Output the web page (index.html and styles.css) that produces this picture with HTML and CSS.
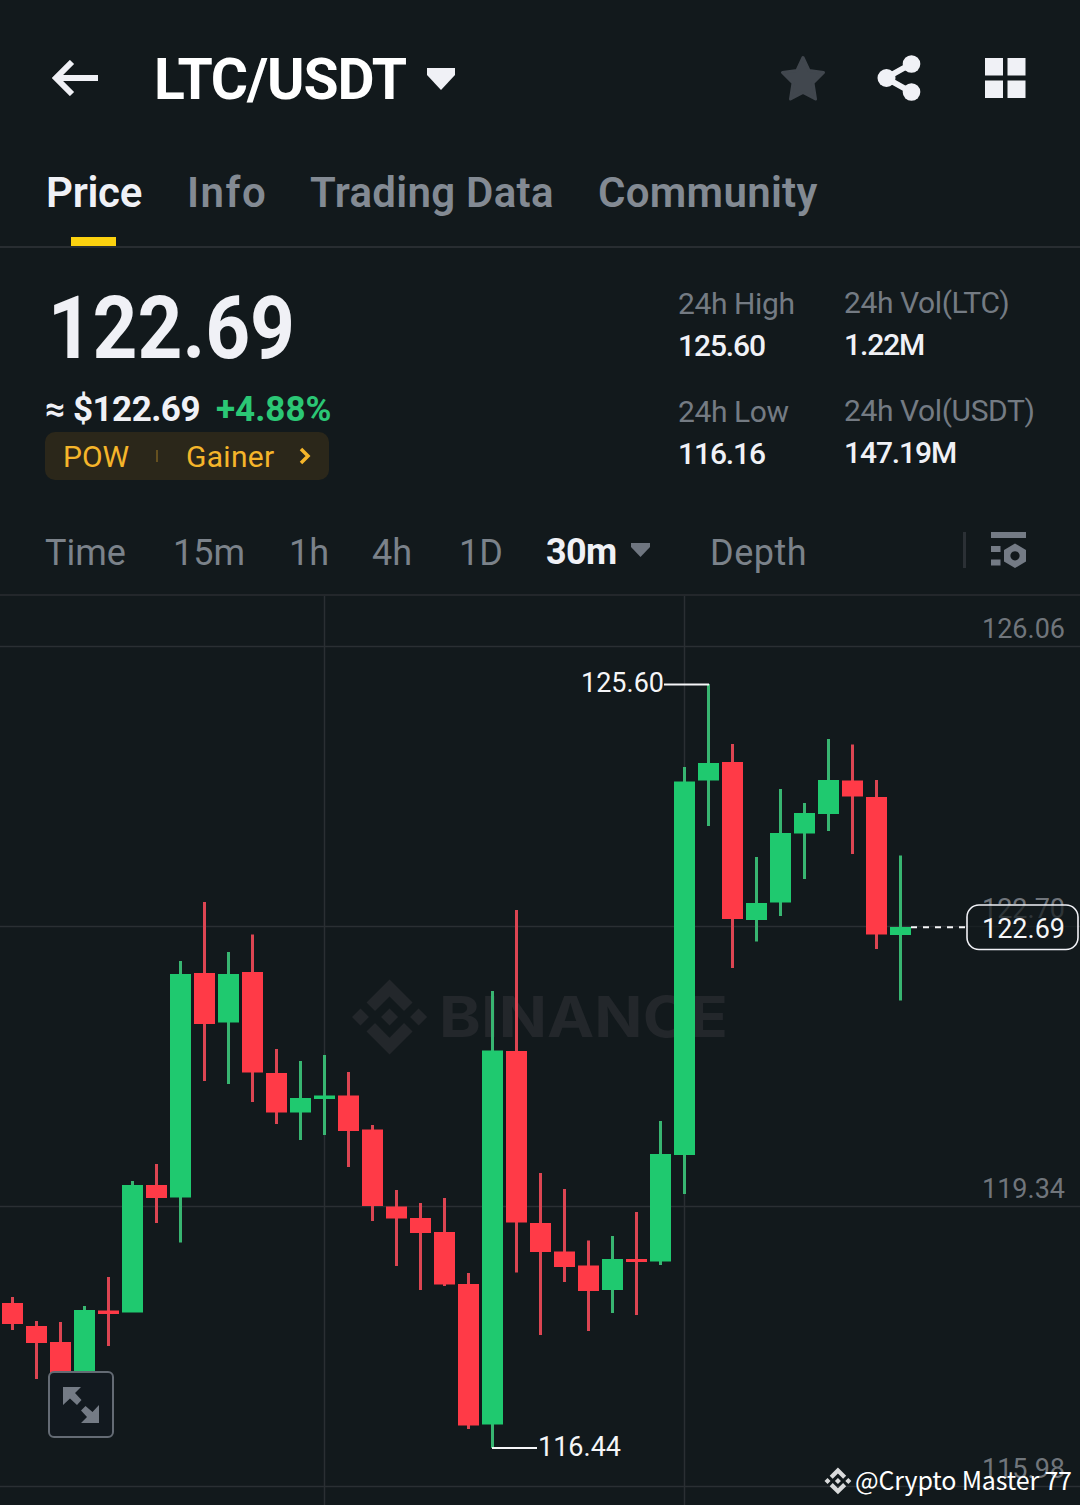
FILE: index.html
```html
<!DOCTYPE html>
<html lang="en">
<head>
    <meta charset="UTF-8">
    <meta name="viewport" content="width=device-width, initial-scale=1.0">
    <title>LTC/USDT</title>
    <link rel="stylesheet" href="styles.css">
</head>
<body>

<header class="header">
    <svg class="back" width="46" height="36" viewBox="0 0 46 36">
        <path d="M20 2 L4 18 L20 34 M4 18 H46" fill="none" stroke="#f0f1f6" stroke-width="6"/>
    </svg>
    <h1 class="pair">LTC/USDT</h1>
    <svg class="pair-caret" width="28" height="22" viewBox="0 0 28 22">
        <path d="M0 0 H28 V7 L14 22 L0 7 Z" fill="#f0f1f6"/>
    </svg>
    <div class="header-icons">
        <svg width="46" height="46" viewBox="0 0 46 46">
            <path d="M23 2.500 L29 15.500 L43.500 17.500 L33 28 L35.500 44 L23 37.500 L10.500 44 L13 28 L2.500 17.500 L17 15.500 Z" fill="#41474e" stroke="#41474e" stroke-width="3" stroke-linejoin="round"/>
        </svg>
        <svg width="44" height="46" viewBox="0 0 44 46">
            <path d="M34 9 L9 23 L34 37" fill="none" stroke="#f0f1f6" stroke-width="6"/>
            <circle cx="9.500" cy="23" r="9" fill="#f0f1f6"/>
            <circle cx="34.500" cy="9" r="8.800" fill="#f0f1f6"/>
            <circle cx="34.500" cy="37" r="8.800" fill="#f0f1f6"/>
        </svg>
        <svg width="41" height="40" viewBox="0 0 41 40">
            <path d="M0 0h18v17.500h-18z M22.500 0h18v17.500h-18z M0 22.500h18v17.500h-18z M22.500 22.500h18v17.500h-18z" fill="#f0f1f6"/>
        </svg>
    </div>
</header>

<nav class="tabs">
    <span class="tab active">Price</span>
    <span class="tab info">Info</span>
    <span class="tab">Trading Data</span>
    <span class="tab community">Community</span>
</nav>

<section class="summary">
    <div class="price-block">
        <div class="price">122.69</div>
        <div class="price-sub">
            <span class="usd">≈ $122.69</span>
            <span class="change">+4.88%</span>
        </div>
        <div class="badge">
            <span class="pow">POW</span>
            <i class="badge-line"></i>
            <span class="gainer">Gainer</span>
            <svg width="12" height="18" viewBox="0 0 12 18">
                <path d="M2 2 L9 9 L2 16" fill="none" stroke="#f5b52a" stroke-width="3.500"/>
            </svg>
        </div>
    </div>
    <dl class="stats">
        <dt>24h High</dt>
        <dd>125.60</dd>
        <dt>24h Low</dt>
        <dd>116.16</dd>
    </dl>
    <dl class="stats volume">
        <dt>24h Vol(LTC)</dt>
        <dd>1.22M</dd>
        <dt>24h Vol(USDT)</dt>
        <dd>147.19M</dd>
    </dl>
</section>

<nav class="intervals">
    <span class="time">Time</span>
    <span>15m</span>
    <span>1h</span>
    <span>4h</span>
    <span>1D</span>
    <span class="selected">30m</span>
    <svg class="small-caret" width="19" height="14" viewBox="0 0 19 14">
        <path d="M0 0 H19 V4 L9.500 14 L0 4 Z" fill="#6f7680"/>
    </svg>
    <span class="depth">Depth</span>
    <i class="line"></i>
    <svg width="36" height="36" viewBox="0 0 36 36">
        <path d="M0 0h35v6h-35z M0 14h9.500v6h-9.500z M0 27.500h9.500v6h-9.500z" fill="#747b85"/>
        <path fill-rule="evenodd" d="M24 11.500 L35 18 V29.500 L24 36 L13 29.500 V18 Z M24 19.200 a4.600 4.600 0 1 0 .01 0 Z" fill="#747b85"/>
    </svg>
</nav>

<main class="chart">
    <svg width="1080" height="909" viewBox="0 596 1080 909">
        <defs>
            <path id="logo" d="M16.624 13.9202l2.7175 2.7154-7.353 7.353-7.353-7.352 2.7175-2.7164 4.6355 4.6595 4.6356-4.6595zm4.6366-4.6366L24 12l-2.7154 2.7164L18.5682 12l2.6924-2.7164zm-9.272.001l2.7163 2.6914-2.7164 2.7174v-.001L9.2721 12l2.7164-2.7154zm-9.2722-.001L5.4088 12l-2.6914 2.6924L0 12l2.7164-2.7164zM11.9885.0115l7.353 7.329-2.7174 2.7154-4.6356-4.6356-4.6355 4.6595-2.7174-2.7154 7.353-7.353z"/>
        </defs>

        <g class="grid">
            <path d="M0 646.500 H1080 M0 926.500 H1080 M0 1206.500 H1080 M0 1486.500 H1080"/>
            <path d="M324.500 596 V1505 M684.500 596 V1505"/>
        </g>

        <g class="watermark">
            <use href="#logo" transform="translate(352 979.500) scale(3.130)"/>
            <text x="439" y="1037" textLength="289" lengthAdjust="spacingAndGlyphs">BINANCE</text>
        </g>

        <g class="axis">
            <text x="982" y="638" textLength="83">126.06</text>
            <text x="982" y="918" textLength="83">122.70</text>
            <text x="982" y="1198" textLength="83">119.34</text>
            <text x="982" y="1478" textLength="83">115.98</text>
        </g>

        <g id="candles"></g>

        <path class="marker" d="M664 684.500 H709 M492 1448 H537"/>
        <text class="label" x="581" y="692" textLength="83">125.60</text>
        <text class="label" x="538" y="1456" textLength="83">116.44</text>

        <path class="marker" d="M911 927.300 H966" stroke-dasharray="6"/>
        <rect class="current" x="967" y="905" width="111" height="44.500" rx="12"/>
        <text class="label" x="982" y="938" textLength="83">122.69</text>

        <g class="author">
            <use href="#logo" fill="#d9dadb" transform="translate(824.500 1467.500) scale(1.120)"/>
            <text x="855" y="1490" textLength="217">@Crypto Master 77</text>
        </g>
    </svg>
    <button class="expand">
        <svg width="38" height="38" viewBox="0 0 38 38">
            <path d="M1 1 H19 L13 7 L19.500 14 L15 19 L8 12.500 L1 19 Z M37 37 H19 L25 31 L19 24.500 L23.500 20 L30.500 26 L37 19 Z" fill="#747b85"/>
        </svg>
    </button>
</main>

<script>
    // high, body top, body bottom, low, direction
    var candles = [
        [1297, 1303, 1324, 1330, "down"],
        [1321, 1326, 1343, 1379, "down"],
        [1322, 1342, 1376, 1380, "down"],
        [1306, 1310, 1376, 1380, "up"],
        [1277, 1310.5, 1314, 1346, "down"],
        [1181, 1185, 1312.5, 1312, "up"],
        [1164, 1185, 1198, 1223, "down"],
        [961, 974, 1197.5, 1242.5, "up"],
        [902, 973, 1024, 1081, "down"],
        [952, 974, 1022.5, 1084, "up"],
        [934.5, 972, 1072.5, 1102, "down"],
        [1049, 1073, 1112.5, 1124, "down"],
        [1061, 1098, 1112.5, 1140, "up"],
        [1055, 1095.5, 1099, 1135, "up"],
        [1072, 1095.5, 1131, 1167, "down"],
        [1125, 1129.5, 1206, 1221, "down"],
        [1190, 1206.5, 1218.5, 1266, "down"],
        [1203, 1218, 1233, 1290, "down"],
        [1198, 1232, 1284.5, 1286, "down"],
        [1273, 1284, 1425.5, 1429, "down"],
        [991, 1050.5, 1424.5, 1448, "up"],
        [910, 1051, 1222.5, 1272.5, "down"],
        [1173, 1223, 1252, 1335, "down"],
        [1189, 1251.5, 1267, 1282, "down"],
        [1240.5, 1265.5, 1291, 1331, "down"],
        [1236, 1259, 1290, 1313, "up"],
        [1212, 1259, 1262, 1315, "down"],
        [1121, 1154, 1261.5, 1265, "up"],
        [767, 781.5, 1155, 1194, "up"],
        [684, 763, 780.5, 826, "up"],
        [744, 762, 919, 968, "down"],
        [857, 903, 920, 941.5, "up"],
        [789, 833, 902.5, 916, "up"],
        [803, 813, 833.5, 879, "up"],
        [739, 780, 814, 831, "up"],
        [744.5, 780.5, 796.5, 854, "down"],
        [780, 797, 934.5, 949, "down"],
        [855.5, 927, 935, 1000.5, "up"]
    ];

    var html = "";
    candles.forEach(function (c, i) {
        var x = 2 + i * 24;
        html += '<rect class="wick ' + c[4] + '" x="' + (x + 9) + '" y="' + c[0] + '" width="3" height="' + (c[3] - c[0]) + '"/>';
        html += '<rect class="body ' + c[4] + '" x="' + x + '" y="' + c[1] + '" width="21" height="' + (c[2] - c[1]) + '"/>';
    });
    document.getElementById("candles").innerHTML = html;
</script>

</body>
</html>
```

FILE: styles.css
```css
body {
    margin: 0;
    width: 1080px;
    background-color: #12191c;
    color: #f0f1f6;
    font-family: Roboto, "Liberation Sans", sans-serif;
}

svg {
    display: block;
}

.header {
    display: flex;
    align-items: center;
    height: 156px;
    padding: 0 54px 0 52px;
    box-sizing: border-box;
}

.pair {
    width: 273px;
    margin: 4px 0 0 56px;
    font-size: 57px;
    line-height: 60px;
    font-weight: 700;
    letter-spacing: -1.1px;
    color: #fff;
}

.pair-caret {
    margin-top: 2px;
}

.header-icons {
    display: flex;
    align-items: center;
    margin-left: auto;
}

.header-icons svg:nth-child(2) {
    margin: 0 64px 0 51px;
}

.tabs {
    display: grid;
    grid-template-columns: 141px 123px 288px auto;
    height: 90px;
    padding-left: 46px;
    border-bottom: 2px solid #282d31;
}

.tab {
    font-size: 42px;
    line-height: 74px;
    font-weight: 600;
    letter-spacing: 0.3px;
    color: #838a93;
}

.tab.info {
    letter-spacing: 1.5px;
}

.tab.active {
    letter-spacing: -0.3px;
    color: #f0f1f6;
}

.tab.active::after {
    content: "";
    display: block;
    width: 45px;
    height: 9px;
    margin: 7px 0 0 25px;
    background-color: #fcd20f;
}

.summary {
    display: flex;
    height: 256px;
    padding-left: 45px;
}

.price-block {
    width: 633px;
    padding-top: 40px;
}

.price {
    padding-left: 3px;
    font-size: 87px;
    line-height: 80px;
    font-weight: 700;
    transform: scaleX(0.9);
    transform-origin: left;
}

.price-sub {
    display: flex;
    height: 46px;
    margin-top: 18px;
    font-size: 35px;
    line-height: 48px;
    font-weight: 700;
}

.usd {
    width: 171px;
    letter-spacing: -0.5px;
    white-space: nowrap;
}

.change {
    color: #2bc775;
}

.badge {
    display: flex;
    align-items: center;
    width: 284px;
    height: 48px;
    padding-left: 18px;
    box-sizing: border-box;
    border-radius: 10px;
    background-color: #2b271a;
    color: #f5b52a;
    font-size: 30px;
}

.pow {
    width: 93px;
}

.badge-line {
    width: 2px;
    height: 12px;
    background-color: #65501f;
}

.gainer {
    width: 113px;
    margin-left: 28px;
    letter-spacing: 0.3px;
}

.stats {
    width: 166px;
    margin: 0;
    padding-top: 35px;
    font-size: 30px;
    line-height: 42px;
    white-space: nowrap;
}

.stats.volume {
    padding-top: 34px;
}

.stats dt {
    letter-spacing: -0.4px;
    color: #747b83;
}

.stats dd {
    margin: 0 0 24px;
    font-weight: 500;
    letter-spacing: -1.1px;
}

.intervals {
    display: grid;
    grid-template-columns: 128px 116px 83px 87px 87px 85px 79px 253px 28px auto;
    align-items: center;
    height: 92px;
    padding: 2px 0 0 45px;
    box-sizing: border-box;
    border-bottom: 2px solid #23272b;
    font-size: 36px;
    color: #7b828a;
}

.intervals span {
    padding-top: 5px;
}

.intervals .selected {
    padding-top: 3px;
    font-weight: 700;
    letter-spacing: -0.7px;
    color: #f0f1f6;
}

.intervals .depth {
    letter-spacing: 0.5px;
}

.intervals .line {
    width: 3px;
    height: 36px;
    background-color: #2b3035;
}

.chart {
    position: relative;
    height: 909px;
}

.grid path {
    stroke: #2a2f33;
    stroke-width: 1.5;
}

.watermark {
    fill: #23272b;
    font-family: Inter, sans-serif;
    font-size: 57px;
    font-weight: 700;
}

.axis,
.label {
    font-size: 27px;
    fill: #70757b;
}

.label {
    fill: #f5f6f8;
}

.wick.up {
    fill: #38b571;
}

.wick.down {
    fill: #dc4552;
}

.body.up {
    fill: #1fc96f;
}

.body.down {
    fill: #ff3a47;
}

.marker {
    stroke: #f5f6f8;
    stroke-width: 2;
}

.current {
    fill: rgba(18, 25, 28, 0.7);
    stroke: #f0f1f6;
    stroke-width: 1.6;
}

.author {
    fill: #fff;
    font-family: "Noto Sans CJK SC", sans-serif;
    font-size: 25px;
    font-weight: 400;
}

/* sits over the bottom left of the candles */
.expand {
    position: absolute;
    left: 48px;
    top: 775px;
    display: flex;
    align-items: center;
    justify-content: center;
    width: 66px;
    height: 67px;
    padding: 0;
    border: 2px solid #646b74;
    border-radius: 6px;
    background-color: #12191f;
}
```
